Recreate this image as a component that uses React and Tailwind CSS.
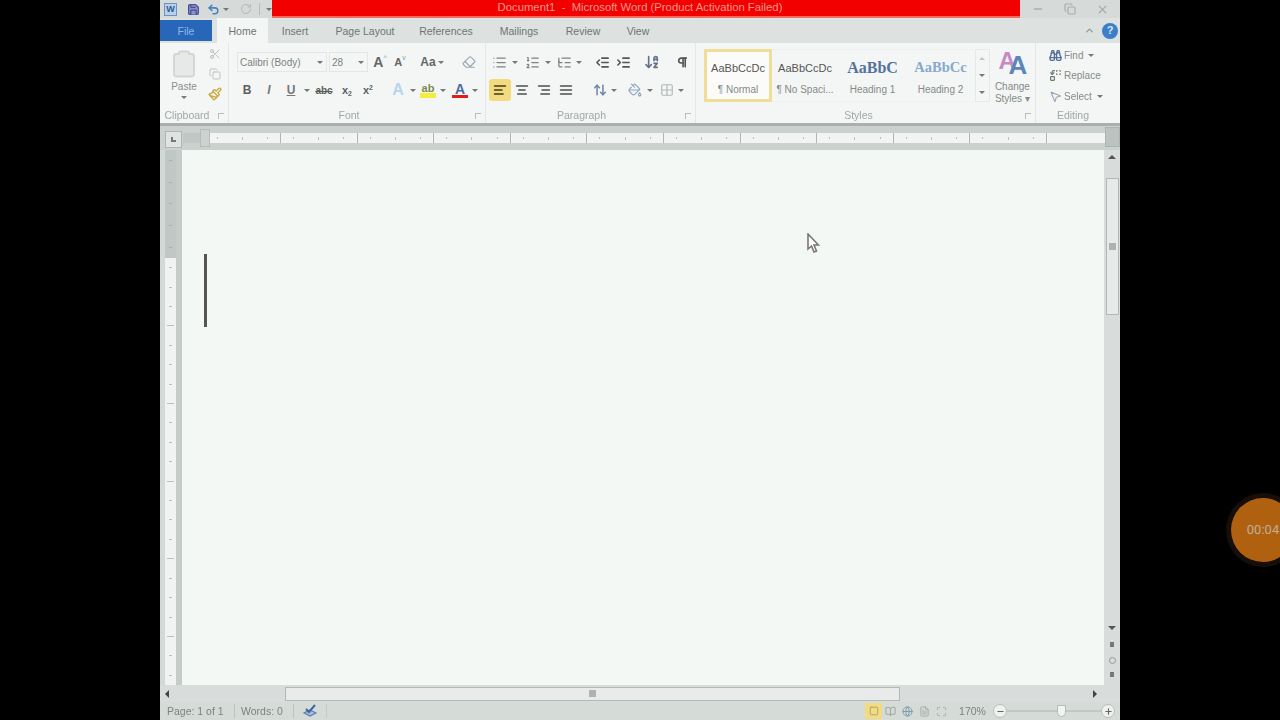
import React from 'react';
import {
  Scissors, Copy, Paintbrush, Eraser, List, ListOrdered, ListTree, IndentDecrease, IndentIncrease,
  ArrowDownAZ, Pilcrow, AlignLeft, AlignCenter, AlignRight, AlignJustify, ArrowUpDown, PaintBucket,
  Grid2x2, Binoculars, Replace, MousePointer2, Save, Undo2, RotateCw, Clipboard,
  ChevronUp, Minus, Plus, Square, BookOpen, Maximize, Globe, FileText, X,
} from 'lucide-react';

const font = "font-['Liberation_Sans',Arial,sans-serif]";

const Caret = ({ className = 'ml-[3px]' }) => (
  <span className={`w-0 h-0 border-x-[3px] border-x-transparent border-t-[3px] border-t-[#777] ${className}`} />
);

// fixed width slot so the ribbon buttons land where they do in the picture
const Cell = ({ w, children, className = '' }) => (
  <div className={`flex items-center justify-center shrink-0 h-[22px] ${w} ${className}`}>{children}</div>
);

const GroupLabel = ({ children, launcher = true, pad = '' }) => (
  <div className={`relative h-[15px] mt-auto flex items-center justify-center text-[10.5px] leading-none text-[#a2a8a5] ${pad}`}>
    {children}
    {launcher && <span className="absolute right-[4px] top-[5px] w-[6px] h-[6px] border-l border-t border-[#bbb]" />}
  </div>
);

const TitleBar = () => (
  <div className="flex h-[18px] bg-[#d6dbd9] shrink-0">
    <div className="w-[112px] flex items-center pl-[4px] gap-[5px]">
      <span className="w-[13px] h-[13px] bg-[#b9d0e8] border border-[#6d93bf] text-[9px] leading-[11px] text-center font-bold text-[#2a5b9b]">W</span>
      <Save size={13} className="text-[#4b4f9a] ml-[5px]" fill="#8f92c8" strokeWidth={2.4} />
      <Undo2 size={13} className="text-[#4d82bd] ml-[2px]" strokeWidth={2.8} />
      <Caret className="ml-[-2px]" />
      <RotateCw size={12} className="text-[#b3b8b6] ml-[6px]" strokeWidth={2} />
      <span className="w-px h-[12px] bg-[#bbb] ml-[2px]" />
      <Caret className="ml-[1px]" />
    </div>
    <div className="w-[748px] bg-[#f20000] border-b-2 border-b-[#f56a5c] flex items-center justify-center pr-[12px] text-[11.3px] leading-none text-[#f3978a]">
      Document1&nbsp; - &nbsp;Microsoft Word (Product Activation Failed)
    </div>
    <div className="flex-1 flex items-center text-[#a9aeac]">
      <Minus size={12} className="ml-[12px]" strokeWidth={3} />
      <Copy size={12} className="ml-[20px]" strokeWidth={2.4} />
      <X size={13} className="ml-[20px]" strokeWidth={2.4} />
    </div>
  </div>
);

const Tabs = () => {
  const tabs = [
    ['Insert', 'w-[54px]'], ['Page Layout', 'w-[86px]'], ['References', 'w-[76px]'],
    ['Mailings', 'w-[70px]'], ['Review', 'w-[58px]'], ['View', 'w-[52px]'],
  ];
  return (
    <div className="flex h-[25px] bg-[#dde2e1] shrink-0 items-start text-[10.5px] leading-none text-[#6f7472]">
      <div className="w-[52px] h-[21px] mt-[2px] pt-[1px] bg-[#2766b8] text-[#8fb8e8] flex items-center justify-center">File</div>
      <div className="w-[51px] h-[25px] ml-[5px] pt-[2px] bg-[#f3f6f4] flex items-center justify-center">Home</div>
      {tabs.map(([name, w]) => (
        <div key={name} className={`h-[25px] pt-[2px] flex items-center justify-center ${w}`}>{name}</div>
      ))}
      <div className="ml-auto h-[25px] flex items-center pr-[2px]">
        <ChevronUp size={11} className="text-[#999] mr-[7px]" strokeWidth={3} />
        <span className="w-[16px] h-[16px] rounded-full bg-[#3b7fc9] text-[#d9e8f7] text-[11px] font-bold flex items-center justify-center">?</span>
      </div>
    </div>
  );
};

const ClipboardGroup = () => (
  <div className="w-[69px] flex flex-col border-r border-[#e3e7e5]">
    <div className="flex pt-[6px] h-[65px]">
      <div className="w-[48px] flex flex-col items-center">
        <Clipboard size={30} className="text-[#d2d6d4]" fill="#e6e9e7" strokeWidth={1.5} />
        <span className="text-[10px] leading-none text-[#8a8f8d] mt-[3px]">Paste</span>
        <Caret className="mt-[4px]" />
      </div>
      <div className="flex flex-col items-center text-[#bdc2c0] w-[14px] mt-[-1px]">
        <Scissors size={12} />
        <Copy size={12} className="mt-[8px]" />
        <Paintbrush size={14} className="text-[#c9a93c] mt-[7px]" strokeWidth={2.4} />
      </div>
    </div>
    <GroupLabel pad="pr-[14px]">Clipboard</GroupLabel>
  </div>
);

const FontGroup = () => (
  <div className="w-[257px] flex flex-col border-r border-[#e3e7e5] pl-[8px] pt-[8px]">
    <div className="flex items-center h-[22px]">
      <div className="w-[90px] h-[20px] border border-[#e2e6e4] flex items-center justify-between px-[2px] text-[10px] text-[#7d8280]">
        Calibri (Body)<Caret className="mr-[1px]" />
      </div>
      <div className="w-[39px] h-[20px] ml-[2px] border border-[#e2e6e4] flex items-center justify-between px-[2px] text-[10px] text-[#7d8280]">
        28<Caret className="mr-[1px]" />
      </div>
      <Cell w="w-[20px] ml-[2px]"><span className="text-[14px] font-bold text-[#666]">A</span><span className="text-[7px] text-[#999] mb-[8px]">^</span></Cell>
      <Cell w="w-[20px]"><span className="text-[11px] font-bold text-[#666]">A</span><span className="text-[7px] text-[#999] mb-[8px]">v</span></Cell>
      <Cell w="w-[24px] ml-[10px]"><span className="text-[12px] font-bold text-[#666]">Aa</span><Caret className="ml-[2px]" /></Cell>
      <Cell w="w-[22px] ml-[14px]"><Eraser size={14} className="text-[#9aa7b5]" /></Cell>
    </div>
    <div className="flex items-center h-[22px] mt-[6px] text-[#5c5f5e]">
      <Cell w="w-[20px]"><span className="text-[12px] font-bold">B</span></Cell>
      <Cell w="w-[20px] ml-[2px]"><span className="text-[12px] italic font-bold text-[#777]">I</span></Cell>
      <Cell w="w-[20px] ml-[2px]"><span className="text-[12px] underline font-bold text-[#777]">U</span></Cell>
      <Cell w="w-[12px]"><Caret className="" /></Cell>
      <Cell w="w-[20px] ml-[1px]"><span className="text-[10px] line-through font-bold">abc</span></Cell>
      <Cell w="w-[20px] ml-[3px]"><span className="text-[11px] font-bold">x<sub className="text-[7px]">2</sub></span></Cell>
      <Cell w="w-[20px] ml-[1px]"><span className="text-[11px] font-bold">x<sup className="text-[7px]">2</sup></span></Cell>
      <Cell w="w-[20px] ml-[10px]"><span className="text-[16px] font-bold text-[#b5d6ee]">A</span></Cell>
      <Cell w="w-[10px]"><Caret className="" /></Cell>
      <Cell w="w-[20px]">
        <span className="flex flex-col items-center">
          <span className="text-[11px] leading-[10px] font-bold text-[#7c8a4c]">ab</span>
          <span className="w-[16px] h-[5px] bg-[#f2ee3c]" />
        </span>
      </Cell>
      <Cell w="w-[10px]"><Caret className="" /></Cell>
      <Cell w="w-[20px] ml-[2px]">
        <span className="flex flex-col items-center">
          <span className="text-[14px] leading-[12px] font-bold text-[#4c6a9c]">A</span>
          <span className="w-[16px] h-[3px] bg-[#e21c1c]" />
        </span>
      </Cell>
      <Cell w="w-[10px]"><Caret className="" /></Cell>
    </div>
    <GroupLabel pad="pr-[24px]">Font</GroupLabel>
  </div>
);

const ParagraphGroup = () => (
  <div className="w-[210px] flex flex-col border-r border-[#e3e7e5] pt-[8px]">
    <div className="flex items-center h-[22px] text-[#7b8280]">
      <Cell w="w-[20px] ml-[3px]"><List size={15} /></Cell>
      <Cell w="w-[12px]"><Caret className="" /></Cell>
      <Cell w="w-[20px] ml-[1px]"><ListOrdered size={15} /></Cell>
      <Cell w="w-[12px]"><Caret className="" /></Cell>
      <Cell w="w-[20px]"><ListTree size={15} /></Cell>
      <Cell w="w-[10px]"><Caret className="" /></Cell>
      <Cell w="w-[20px] ml-[8px]"><IndentDecrease size={15} className="text-[#555]" strokeWidth={2.6} /></Cell>
      <Cell w="w-[20px] ml-[1px]"><IndentIncrease size={15} className="text-[#555]" strokeWidth={2.6} /></Cell>
      <Cell w="w-[20px] ml-[9px]"><ArrowDownAZ size={16} className="text-[#66708a]" strokeWidth={2.4} /></Cell>
      <Cell w="w-[20px] ml-[10px]"><Pilcrow size={13} className="text-[#555]" strokeWidth={3} /></Cell>
    </div>
    <div className="flex items-center h-[22px] mt-[6px] text-[#777]">
      <Cell w="w-[22px] ml-[3px] bg-[#f2dc7f] rounded-[3px]"><AlignLeft size={14} className="text-[#6d6330]" strokeWidth={3.4} /></Cell>
      <Cell w="w-[22px]"><AlignCenter size={14} strokeWidth={3.4} /></Cell>
      <Cell w="w-[22px]"><AlignRight size={14} strokeWidth={3.4} /></Cell>
      <Cell w="w-[22px]"><AlignJustify size={14} strokeWidth={3.4} /></Cell>
      <Cell w="w-[20px] ml-[13px]"><ArrowUpDown size={14} className="text-[#6d87a6]" strokeWidth={2.6} /></Cell>
      <Cell w="w-[8px]"><Caret className="" /></Cell>
      <Cell w="w-[20px] ml-[7px]"><PaintBucket size={14} className="text-[#8fa6c0]" /></Cell>
      <Cell w="w-[10px]"><Caret className="" /></Cell>
      <Cell w="w-[20px] ml-[2px]"><Grid2x2 size={14} className="text-[#b4b9b7]" /></Cell>
      <Cell w="w-[8px]"><Caret className="" /></Cell>
    </div>
    <GroupLabel pad="pr-[18px]">Paragraph</GroupLabel>
  </div>
);

const StyleItem = ({ sample, label, w, sampleClass }) => (
  <div className={`${w} h-[49px] flex flex-col items-center overflow-hidden`}>
    <span className={`h-[28px] mt-[3px] flex items-center whitespace-nowrap ${sampleClass}`}>{sample}</span>
    <span className="text-[10px] leading-none text-[#858a88] mt-[3px] whitespace-nowrap">{label}</span>
  </div>
);

const StylesGroup = () => (
  <div className="w-[340px] flex flex-col border-r border-[#e3e7e5]">
    <div className="flex h-[59px] pl-[8px] pt-[6px]">
      <div className="w-[68px] h-[53px] border-[3px] border-[#f0dd98] shrink-0 bg-[#fbfcfa] overflow-hidden flex flex-col items-center">
        <span className="h-[27px] flex items-center text-[11px] text-[#555] whitespace-nowrap mt-[3px]">AaBbCcDc</span>
        <span className="text-[10px] leading-none text-[#858a88] mt-[3px]">¶ Normal</span>
      </div>
      <div className="flex border-y border-[#eef1ef] h-[53px] items-center">
        <StyleItem w="w-[66px]" sample="AaBbCcDc" label="¶ No Spaci..." sampleClass="text-[11px] text-[#555]" />
        <StyleItem w="w-[69px]" sample="AaBbC" label="Heading 1" sampleClass="font-['Liberation_Serif',serif] text-[16px] font-bold text-[#54739c]" />
        <StyleItem w="w-[67px]" sample="AaBbCc" label="Heading 2" sampleClass="font-['Liberation_Serif',serif] text-[14.5px] font-bold text-[#88a9cb]" />
      </div>
      <div className="w-[15px] h-[53px] ml-[1px] flex flex-col items-center justify-around border border-[#e6e9e7]">
        <Caret className="rotate-180 opacity-40" />
        <Caret className="" />
        <Caret className="" />
      </div>
      <div className="w-[46px] flex flex-col items-center">
        <div className="relative w-[32px] h-[32px] shrink-0">
          <span className="absolute left-[2px] top-[-1px] text-[24px] leading-[26px] font-bold text-[#c58bc6]">A</span>
          <span className="absolute left-[12px] top-[3px] text-[26px] leading-[26px] font-bold text-[#5f85b8]">A</span>
        </div>
        <span className="shrink-0 text-[10px] leading-[12px] text-[#858a88] text-center whitespace-nowrap">Change<br />Styles ▾</span>
      </div>
    </div>
    <GroupLabel pad="pr-[14px]">Styles</GroupLabel>
  </div>
);

const EditingGroup = () => {
  const rows = [
    [<Binoculars key="f" size={13} className="text-[#53709c]" strokeWidth={2.6} />, 'Find', true],
    [<Replace key="r" size={13} className="text-[#6d7a70]" strokeWidth={2.2} />, 'Replace', false],
    [<MousePointer2 key="s" size={13} className="text-[#9aa5b4]" strokeWidth={2} />, 'Select', true],
  ];
  return (
    <div className="flex-1 flex flex-col">
      <div className="pl-[10px] pt-[2px] flex flex-col">
        {rows.map(([icon, label, caret]) => (
          <div key={label} className="flex items-center h-[20.5px] text-[10px] text-[#858a88]">
            <span className="w-[18px] flex justify-center">{icon}</span>
            {label}
            {caret && <Caret className="ml-[5px]" />}
          </div>
        ))}
      </div>
      <GroupLabel launcher={false} pad="pr-[10px]">Editing</GroupLabel>
    </div>
  );
};

const HorizontalRuler = () => {
  const cells = Array.from({ length: 11 });
  return (
    <div className="h-[27px] shrink-0 bg-[#cbd1ce] border-t-[3px] border-t-[#abb0ad] flex items-start">
      <div className="w-[17px] h-[17px] ml-[5px] mt-[5px] border border-[#b0b5b3] bg-[#dfe3e1] flex items-center justify-center">
        <span className="w-[5px] h-[5px] border-l-2 border-b-2 border-[#777]" />
      </div>
      <div className="w-[22px] h-[10px] ml-[1px] mt-[7px] bg-[#c0c7c4]" />
      <div className="relative flex-1 h-[10px] mt-[7px] bg-[#f1f4f2] flex">
        <span className="absolute left-[-5px] top-[-4px] w-[10px] h-[18px] border border-[#b6bcb9] bg-[#ccd2cf]" />
        {cells.map((_, i) => (
          <div key={i} className={`flex items-center justify-around shrink-0 h-full border-r border-r-[#b1b6b4] ${i === 0 ? 'w-[76px]' : 'w-[76.6px]'}`}>
            <span className="w-px h-[2px] bg-[#bcc1bf]" />
            <span className="w-px h-[3px] bg-[#bcc1bf]" />
            <span className="w-px h-[2px] bg-[#bcc1bf]" />
          </div>
        ))}
      </div>
      <div className="w-[15px] h-[20px] mt-[1px] bg-[#bcc2bf] border border-[#aeb4b1]" />
    </div>
  );
};

const VerticalRuler = () => (
  <div className="w-[22px] shrink-0 bg-[#d3d9d6] flex">
    <div className="w-[11px] ml-[5px] bg-[#f0f3f1] flex flex-col items-center">
      <div className="h-[108px] w-full bg-[#bfc8c5] flex flex-col items-center justify-around">
        {[0, 1, 2, 3, 4].map((i) => <span key={i} className="w-[3px] h-px bg-[#a8afac]" />)}
      </div>
      <div className="flex-1 flex flex-col items-center justify-around w-full">
        {Array.from({ length: 22 }).map((_, i) => (
          <span key={i} className={`h-px bg-[#bbc0be] ${i % 4 === 3 ? 'w-[7px]' : 'w-[3px]'}`} />
        ))}
      </div>
    </div>
    <div className="w-[6px] bg-[#c5ccc9]" />
  </div>
);

const VerticalScroll = () => (
  <div className="w-[16px] shrink-0 bg-[#d8dddb] flex flex-col items-center">
    <span className="mt-[5px] w-0 h-0 border-x-[4px] border-x-transparent border-b-[4px] border-b-[#555]" />
    <div className="mt-[19px] w-[13px] h-[137px] bg-[#e6eae9] border border-[#b2b8b5] flex items-center justify-center">
      <span className="w-[7px] h-[7px] bg-[#aeb3b1]" />
    </div>
    <span className="mt-auto w-0 h-0 border-x-[4px] border-x-transparent border-t-[4px] border-t-[#555]" />
    <span className="mt-[12px] w-[4px] h-[5px] bg-[#777]" />
    <span className="mt-[10px] w-[7px] h-[7px] rounded-full border border-[#999]" />
    <span className="mt-[8px] mb-[8px] w-[4px] h-[5px] bg-[#777]" />
  </div>
);

const HorizontalScroll = () => (
  <div className="h-[17px] shrink-0 bg-[#d8dddb] flex items-center">
    <span className="ml-[5px] w-0 h-0 border-y-[4px] border-y-transparent border-r-[4px] border-r-[#444]" />
    <div className="ml-[116px] w-[615px] h-[14px] bg-[#e8ebea] border border-[#b2b8b5] flex items-center justify-center">
      <span className="w-[7px] h-[7px] bg-[#aeb3b1]" />
    </div>
    <span className="ml-[193px] w-0 h-0 border-y-[4px] border-y-transparent border-l-[4px] border-l-[#444]" />
  </div>
);

const StatusBar = () => (
  <div className="h-[18px] shrink-0 bg-[#d5dcd8] flex items-center text-[10.5px] leading-none text-[#7c8280]">
    <span className="ml-[7px] w-[67px]">Page: 1 of 1</span>
    <span className="w-px h-[14px] bg-[#bcc2bf]" />
    <span className="ml-[6px] w-[52px]">Words: 0</span>
    <span className="w-px h-[14px] bg-[#bcc2bf]" />
    {/* proofing icon: book with a tick */}
    <svg className="ml-[8px]" width="16" height="14" viewBox="0 0 16 14" fill="none">
      <path d="M2 9 L8 12 L14 9 L8 6 Z" fill="#a9bbd6" stroke="#5f7fae" strokeWidth="1.2" />
      <path d="M4 5 L7 8 L13 1" stroke="#3f66a3" strokeWidth="2" />
    </svg>
    <span className="ml-[8px] w-px h-[14px] bg-[#c5cac7]" />
    <div className="ml-auto flex items-center">
      <span className="w-[17px] h-[16px] bg-[#f2dc7f] flex items-center justify-center"><Square size={10} className="text-[#9b9c7c]" /></span>
      <span className="w-[17px] flex justify-center"><BookOpen size={11} className="text-[#9aa09d]" /></span>
      <span className="w-[17px] flex justify-center"><Globe size={11} className="text-[#7d96a8]" /></span>
      <span className="w-[17px] flex justify-center"><FileText size={11} className="text-[#a5aaa8]" /></span>
      <span className="w-[17px] flex justify-center"><Maximize size={11} className="text-[#a5aaa8]" /></span>
      <span className="ml-[9px] w-[27px] text-center">170%</span>
      <span className="ml-[7px] w-[14px] h-[14px] rounded-full bg-[#eef1ef] border border-[#b8bdbb] flex items-center justify-center"><Minus size={9} className="text-[#666]" strokeWidth={3} /></span>
      <div className="relative w-[94px] h-[2px] bg-[#c2c8c5]">
        <span className="absolute left-[50px] top-[-5px] w-[9px] h-[12px] rounded-b-full bg-[#f2f4f3] border border-[#b5bab8]" />
      </div>
      <span className="w-[14px] h-[14px] mr-[5px] rounded-full bg-[#eef1ef] border border-[#b8bdbb] flex items-center justify-center"><Plus size={9} className="text-[#666]" strokeWidth={3} /></span>
    </div>
  </div>
);

export default function App() {
  return (
    <div className={`relative w-[1280px] h-[720px] bg-black overflow-hidden flex justify-center ${font}`}>
      <div className="w-[960px] h-[720px] flex flex-col blur-[0.7px]">
        <TitleBar />
        <Tabs />
        <div className="h-[80px] shrink-0 bg-[#f3f6f4] flex">
          <ClipboardGroup />
          <FontGroup />
          <ParagraphGroup />
          <StylesGroup />
          <EditingGroup />
        </div>
        <HorizontalRuler />
        <div className="flex-1 flex min-h-0">
          <VerticalRuler />
          <div className="flex-1 bg-[#f3f8f4] pt-[104px] pl-[22px]">
            <div className="w-[3px] h-[73px] bg-[#555]" />
          </div>
          <VerticalScroll />
        </div>
        <HorizontalScroll />
        <StatusBar />
      </div>

      {/* mouse pointer over the page */}
      <svg className="absolute left-[806px] top-[233px] blur-[0.7px]" width="14" height="21" viewBox="0 0 14 21">
        <path d="M2 1 L2 16 L5.5 13 L8 19 L10.5 18 L8 12 L12.5 12 Z" fill="#fff" stroke="#777" strokeWidth="1.6" />
      </svg>

      {/* screen recorder timer, runs off the right edge */}
      <div className="absolute left-[1226px] top-[493px] w-[74px] h-[74px] rounded-full bg-[#160e07] flex items-center justify-center">
        <div className="w-[64px] h-[64px] rounded-full bg-[#b0610f] flex items-center justify-center text-[13px] text-[#bfae99] font-['Roboto',sans-serif]">
          00:04
        </div>
      </div>
    </div>
  );
}
